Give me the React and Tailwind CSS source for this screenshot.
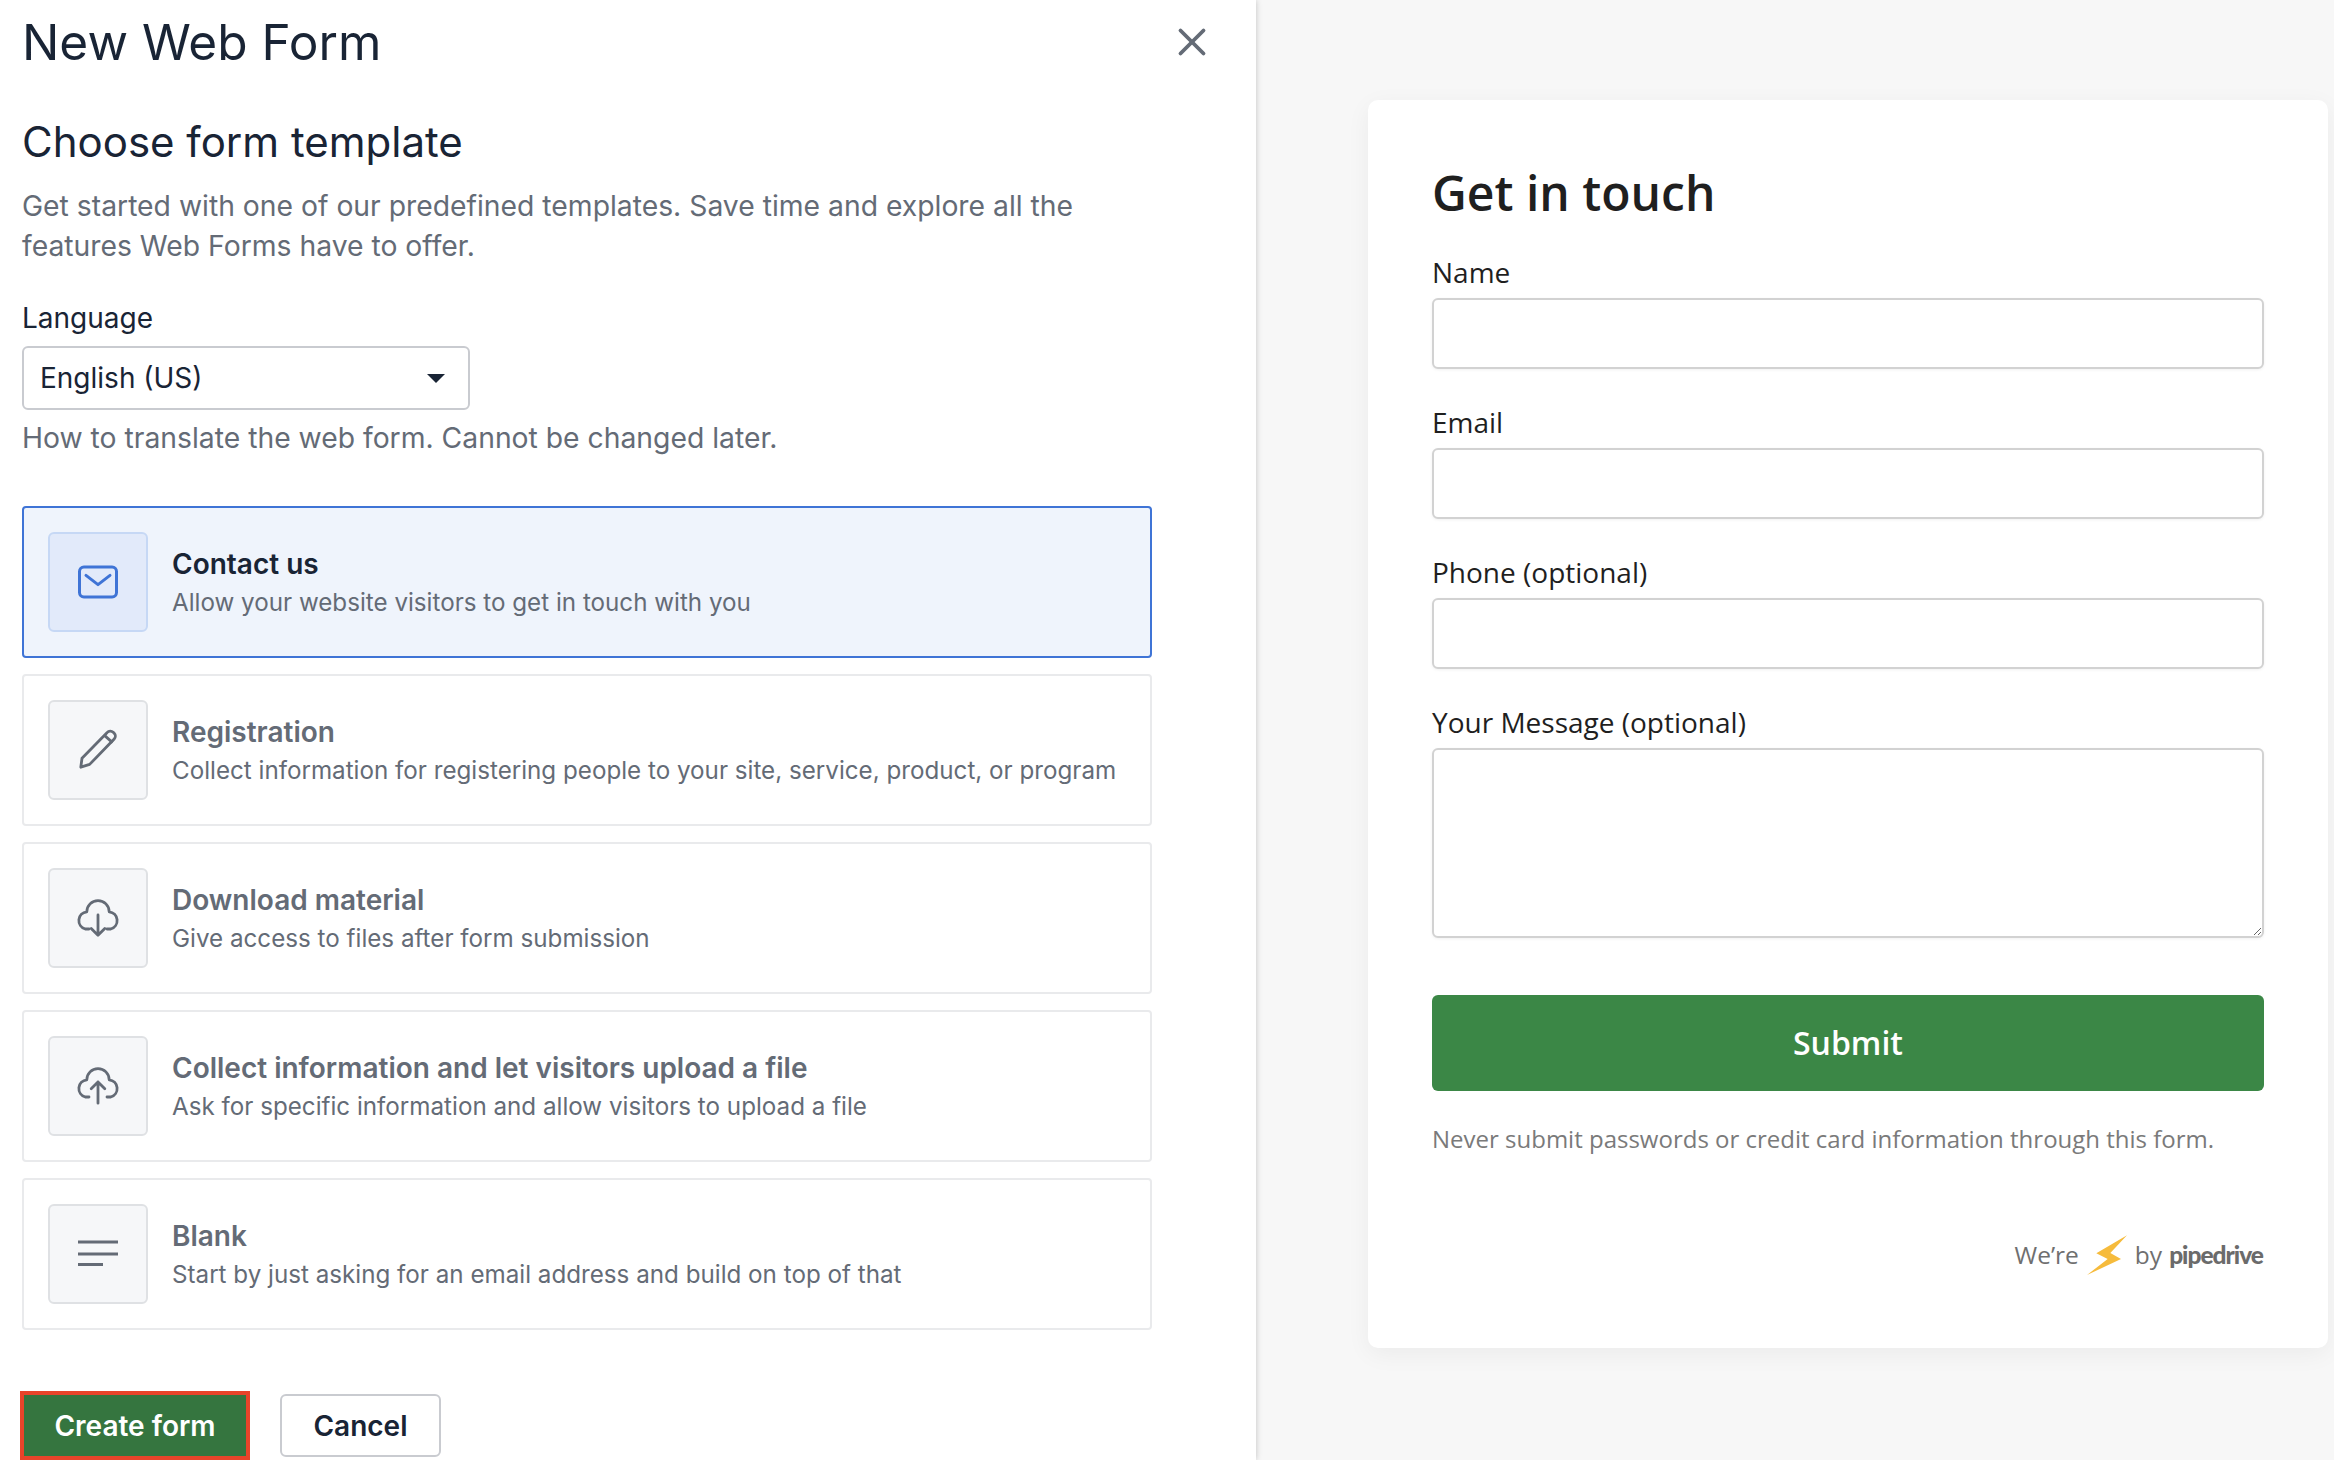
import React from 'react';
import { X } from 'lucide-react';

const inter = { fontFamily: 'Inter, sans-serif' };

const MailIcon = () => (
  <svg width="48" height="48" viewBox="0 0 24 24" fill="none" stroke="currentColor" strokeWidth="1.5" strokeLinecap="round" strokeLinejoin="round">
    <rect x="2.75" y="4.5" width="18.5" height="15" rx="2.2" />
    <path d="M6 8.7l6 4.6 6-4.6" />
  </svg>
);

const PencilIcon = () => (
  <svg width="48" height="48" viewBox="0 0 24 24" fill="none" stroke="currentColor" strokeWidth="1.4" strokeLinejoin="round">
    <path d="M3.4 20.6l.6-4.5L16.6 3.2a2.1 2.1 0 0 1 3-.1l.5.5a2.1 2.1 0 0 1 0 2.9L7.8 19.2z" />
    <path d="M15.2 4.7l4.1 3.6" />
  </svg>
);

const CloudDownIcon = () => (
  <svg width="48" height="48" viewBox="0 0 24 24" fill="none" stroke="currentColor" strokeWidth="1.4" strokeLinecap="round" strokeLinejoin="round">
    <path d="M7.5 17.5H5.6A4.4 4.4 0 0 1 6.4 8.9 5.6 5.6 0 0 1 17.6 8.9 4.4 4.4 0 0 1 18.4 17.5H16.5" />
    <path d="M12 10.5v10M8.6 17.2l3.4 3.4 3.4-3.4" />
  </svg>
);

const CloudUpIcon = () => (
  <svg width="48" height="48" viewBox="0 0 24 24" fill="none" stroke="currentColor" strokeWidth="1.4" strokeLinecap="round" strokeLinejoin="round">
    <path d="M7.5 17.5H5.6A4.4 4.4 0 0 1 6.4 8.9 5.6 5.6 0 0 1 17.6 8.9 4.4 4.4 0 0 1 18.4 17.5H16.5" />
    <path d="M12 20.6v-10.6M8.6 13.4l3.4-3.4 3.4 3.4" />
  </svg>
);

const LinesIcon = () => (
  <svg width="48" height="48" viewBox="0 0 24 24" fill="none" stroke="currentColor" strokeWidth="1.5">
    <path d="M2 6h20M2 12h20M2 17.3h12.5" />
  </svg>
);

const templates = [
  { title: 'Contact us', desc: 'Allow your website visitors to get in touch with you', icon: <MailIcon />, active: true },
  { title: 'Registration', desc: 'Collect information for registering people to your site, service, product, or program', icon: <PencilIcon /> },
  { title: 'Download material', desc: 'Give access to files after form submission', icon: <CloudDownIcon /> },
  { title: 'Collect information and let visitors upload a file', desc: 'Ask for specific information and allow visitors to upload a file', icon: <CloudUpIcon /> },
  { title: 'Blank', desc: 'Start by just asking for an email address and build on top of that', icon: <LinesIcon /> },
];

const TemplateCard = ({ title, desc, icon, active }) => (
  <div className={`flex items-center h-[152px] pl-[24px] rounded-[4px] border-2 ${active ? 'border-[#3f74d6] bg-[#eff4fc]' : 'border-[#e9eaec] bg-white'}`}>
    <div className={`flex items-center justify-center w-[100px] h-[100px] rounded-[6px] border-2 ${active ? 'border-[#c6d8f5] bg-[#e2eafa] text-[#3f74d6]' : 'border-[#dfe1e4] bg-[#f6f7f9] text-[#646b76]'}`}>
      {icon}
    </div>
    <div className="ml-[24px] pt-[2px]">
      <div className={`text-[28px] leading-[40px] font-semibold ${active ? 'text-[#192435]' : 'text-[#646b76]'}`}>{title}</div>
      <div className="text-[24.2px] leading-[38px] text-[#646b76]">{desc}</div>
    </div>
  </div>
);

const Field = ({ label, children }) => (
  <div className="flex flex-col">
    <label className="mb-[6px] text-[28px] leading-[40px] text-[#1f1f1f]">{label}</label>
    {children}
  </div>
);

const inputClass = 'block w-full rounded-[6px] border-2 border-[#d2d2d2] bg-white shadow-[0_1px_3px_rgba(0,0,0,0.06)]';

export default function App() {
  return (
    <div className="flex h-[1460px] w-[2334px] overflow-hidden bg-[#f7f7f7]">
      {/* left panel */}
      <div className="flex flex-col w-[1256px] h-full pl-[22px] bg-white shadow-[0_0_6px_rgba(0,0,0,0.22)]" style={inter}>
        <div className="flex items-center justify-between h-[84px] pr-[41px]">
          <h1 className="text-[49.6px] leading-[84px] text-[#192435]">New Web Form</h1>
          <X size={46} strokeWidth={2} className="text-[#646b76]" />
        </div>
        <h2 className="mt-[32px] text-[42px] leading-[52px] text-[#192435]">Choose form template</h2>
        <p className="mt-[18px] w-[1100px] text-[28.3px] leading-[40px] text-[#646b76]">
          Get started with one of our predefined templates. Save time and explore all the features Web Forms have to offer.
        </p>
        <div className="mt-[32px] text-[28px] leading-[40px] text-[#192435]">Language</div>
        <div className="flex items-center justify-between mt-[8px] w-[448px] h-[64px] pl-[16px] pr-[23px] rounded-[6px] border-2 border-[#c9cbd0] text-[28px] text-[#192435] bg-white">
          <span>English (US)</span>
          <span className="w-0 h-0 border-x-[9px] border-x-transparent border-t-[9px] border-t-[#192435]" />
        </div>
        <p className="mt-[8px] text-[28.3px] leading-[40px] text-[#646b76]">How to translate the web form. Cannot be changed later.</p>

        <div className="flex flex-col gap-[16px] mt-[48px] w-[1130px]">
          {templates.map((t) => (
            <TemplateCard key={t.title} {...t} />
          ))}
        </div>

        <div className="flex items-center gap-[30px] mt-[61px] -ml-[2px]">
          <button className="w-[230px] h-[69px] border-4 border-[#e8442a] bg-[#35753f] text-white text-[28px] font-semibold">Create form</button>
          <button className="w-[161px] h-[63px] rounded-[6px] border-2 border-[#c9cbd0] bg-white text-[#192435] text-[28px] font-semibold">Cancel</button>
        </div>
      </div>

      {/* preview */}
      <div className="flex-1 pt-[100px] pl-[112px] pr-[6px]" style={{ fontFamily: '"Open Sans", sans-serif' }}>
        <div className="h-[1248px] rounded-[10px] bg-white px-[64px] pt-[60px] shadow-[0_6px_24px_rgba(0,0,0,0.05)]">
          <h2 className="text-[48px] leading-[66px] font-semibold text-[#1f1f1f]">Get in touch</h2>
          <div className="flex flex-col gap-[33px] mt-[26px]">
            <Field label="Name"><input className={`${inputClass} h-[71px]`} /></Field>
            <Field label="Email"><input className={`${inputClass} h-[71px]`} /></Field>
            <Field label="Phone (optional)"><input className={`${inputClass} h-[71px]`} /></Field>
            <Field label="Your Message (optional)"><textarea className={`${inputClass} h-[190px]`} /></Field>
          </div>
          <button className="mt-[57px] w-full h-[96px] rounded-[6px] bg-[#3b8746] text-white text-[32px] font-semibold">Submit</button>
          <p className="mt-[30px] text-[24px] leading-[36px] text-[#7a7a7a]">Never submit passwords or credit card information through this form.</p>
          <div className="flex items-center justify-end mt-[78px] text-[24.5px] text-[#6f6f6f]">
            <span>We’re</span>
            <svg width="40" height="40" viewBox="0 0 120 120" className="ml-[8px] mr-[8px]">
              <path d="M121 0L28 55l34 17L0 120l102-48-32-18z" fill="#f6bb3c" />
            </svg>
            <span>by</span>
            <span className="ml-[7px] mr-[1px] font-black tracking-[-1px] text-[#6b6b6b]" style={{ fontFamily: 'Lato, sans-serif' }}>pipedrive</span>
          </div>
        </div>
      </div>
    </div>
  );
}
